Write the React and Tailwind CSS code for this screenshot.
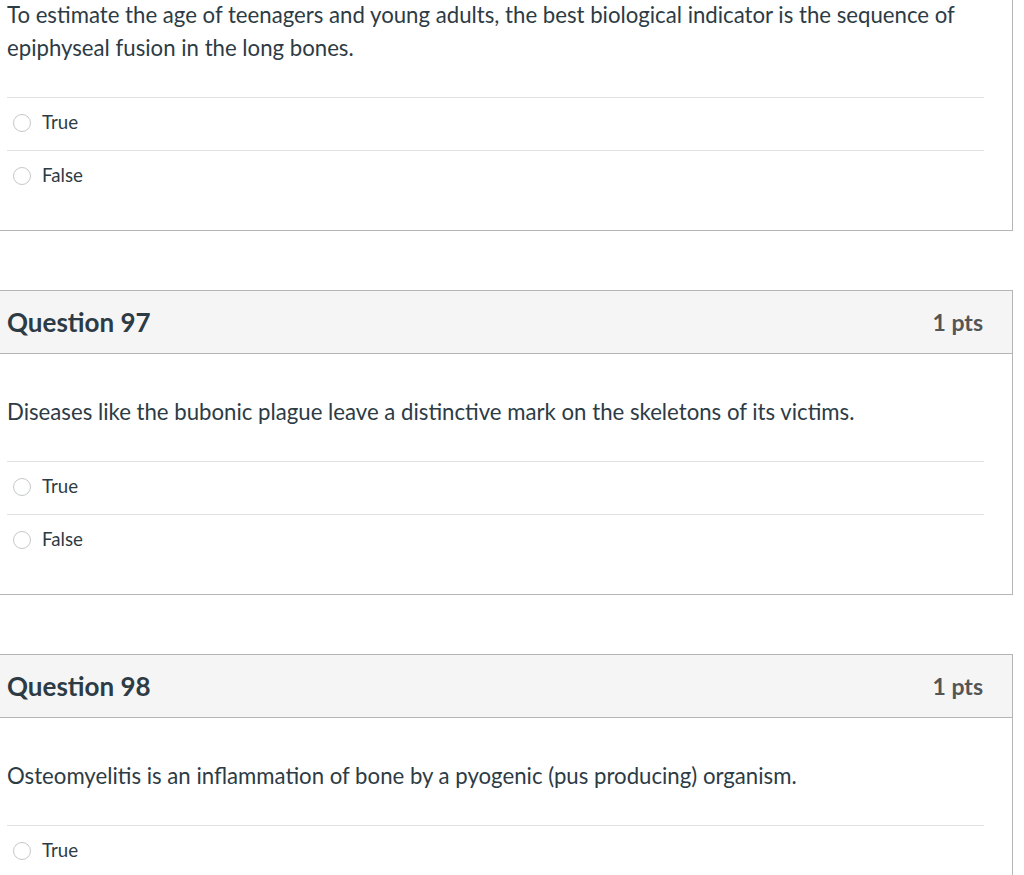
import React from 'react';

const questions = [
  {
    id: 96,
    header: false,
    text: 'To estimate the age of teenagers and young adults, the best biological indicator is the sequence of epiphyseal fusion in the long bones.',
  },
  {
    id: 97,
    header: true,
    text: 'Diseases like the bubonic plague leave a distinctive mark on the skeletons of its victims.',
  },
  {
    id: 98,
    header: true,
    text: 'Osteomyelitis is an inflammation of bone by a pyogenic (pus producing) organism.',
  },
];

const Answer = ({ label }) => (
  <div className="flex h-[53px] items-center border-t border-[#dfe2e4] pb-[4px]">
    <span className="ml-[6px] mt-[2px] h-[18px] w-[18px] rounded-full border border-[#c4c8cb] bg-white" />
    <span className="ml-[11px] text-[18.7px] text-[#2d3b45]">{label}</span>
  </div>
);

const QuestionCard = ({ q }) => (
  <div className="w-[1013px] border-b border-r border-[#b5b5b5] bg-white">
    {q.header && (
      <div className="flex h-[64px] items-center justify-between border-y border-[#b5b5b5] bg-[#f5f5f5] pl-[7px] pr-[29px]">
        <h2 className="text-[26px] font-bold text-[#2d3b45]">Question {q.id}</h2>
        <span className="text-[23px] font-bold text-[#555]">1 pts</span>
      </div>
    )}
    <div className={q.header ? 'pl-[7px] pr-[28px] pt-[41px] pb-[27px]' : 'pl-[7px] pr-[28px] pb-[27px]'}>
      <p className={q.header ? 'text-[22.2px] leading-[33px] text-[#2d3b45]' : 'mt-[-2px] text-[22.2px] leading-[33px] text-[#2d3b45]'}>
        {q.text}
      </p>
      <div className="mt-[33px]">
        <Answer label="True" />
        <Answer label="False" />
      </div>
    </div>
  </div>
);

export default function App() {
  return (
    <div className="h-[875px] overflow-hidden bg-white font-['Lato','Liberation_Sans',sans-serif]">
      <div className="flex flex-col gap-[59px]">
        {questions.map((q) => (
          <QuestionCard key={q.id} q={q} />
        ))}
      </div>
    </div>
  );
}
